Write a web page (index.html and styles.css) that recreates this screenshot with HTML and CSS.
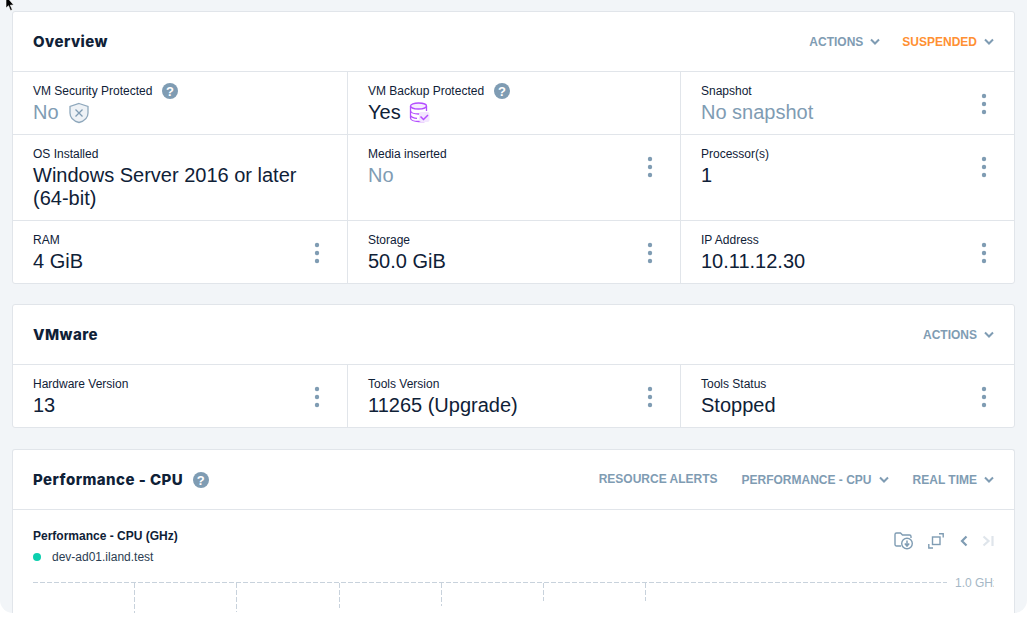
FILE: index.html
```html
<!DOCTYPE html>
<html lang="en">
<head>
<meta charset="utf-8">
<title>VM Overview</title>
<link rel="stylesheet" href="styles.css">
</head>
<body>
<svg class="cursor" width="16" height="13" viewBox="0 0 16 13"><path d="M6 -4V8l2.500-2.300L10.500 10.500l1.800-.8L10.300 5.200l3.400-.2z" fill="#000" stroke="#fff" stroke-width=".6"/></svg>
<svg class="defs" width="0" height="0">
  <defs>
    <g id="kebab"><circle cx="3" cy="3" r="2.200"/><circle cx="3" cy="11" r="2.200"/><circle cx="3" cy="19" r="2.200"/></g>
    <g id="chev"><path d="M1 1.500 5 5.500 9 1.500" fill="none" stroke-width="2"/></g>
    <g id="help"><circle cx="8" cy="8" r="8" fill="#7f9cb3"/><text x="8" y="12.500" text-anchor="middle" class="help-q">?</text></g>
  </defs>
</svg>
<main class="page">
  <section class="card">
    <header class="card-head">
      <h2 class="title">Overview</h2>
      <div class="actions">
        <span class="act">ACTIONS <svg class="chev" width="10" height="7"><use href="#chev"/></svg></span>
        <span class="act act-orange">SUSPENDED <svg class="chev" width="10" height="7"><use href="#chev"/></svg></span>
      </div>
    </header>
    <div class="grid">
      <div class="cell">
        <div class="cell-body">
          <div class="label">VM Security Protected <svg class="help" width="16" height="16"><use href="#help"/></svg></div>
          <div class="value muted">No <svg class="vicon" width="21" height="22" viewBox="0 0 21 22"><path d="M11 1.500 20 4.500V11c0 4.600-3.600 8-9 9.500C5.600 19 2 15.600 2 11V4.500z" fill="#eef2f6" stroke="#8fa8bc" stroke-width="1.300"/><path d="M7.500 7.500 14.500 14.500M14.500 7.500 7.500 14.500" stroke="#7f9cb3" stroke-width="1.300"/></svg></div>
        </div>
      </div>
      <div class="cell">
        <div class="cell-body">
          <div class="label">VM Backup Protected <svg class="help" width="16" height="16"><use href="#help"/></svg></div>
          <div class="value">Yes <svg class="vicon vicon-db" width="21" height="22" viewBox="0 0 21 22"><ellipse cx="9.500" cy="4" rx="8" ry="3" fill="#f6ecff" stroke="#b44dff" stroke-width="1.300"/><path d="M1.500 4V16c0 2 3.500 3.500 8 3.500h6M17.500 4V9M1.500 8.500c0 2 3.500 3.500 8 3.500 3 0 5-.5 6.500-1.500M1.500 13c0 2 3.500 3.300 6.500 3.300" fill="none" stroke="#b44dff" stroke-width="1.300"/><rect x="10" y="10" width="10.500" height="10" rx="2" fill="#f3e6ff"/><path d="M11.500 14.500 14.500 17.500 19 13" fill="none" stroke="#b44dff" stroke-width="1.500"/></svg></div>
        </div>
      </div>
      <div class="cell">
        <div class="cell-body">
          <div class="label">Snapshot</div>
          <div class="value muted">No snapshot</div>
        </div>
        <svg class="kebab" width="6" height="22"><use href="#kebab"/></svg>
      </div>

      <div class="cell">
        <div class="cell-body">
          <div class="label">OS Installed</div>
          <div class="value">Windows Server 2016 or later (64-bit)</div>
        </div>
      </div>
      <div class="cell">
        <div class="cell-body">
          <div class="label">Media inserted</div>
          <div class="value muted">No</div>
        </div>
        <svg class="kebab" width="6" height="22"><use href="#kebab"/></svg>
      </div>
      <div class="cell">
        <div class="cell-body">
          <div class="label">Processor(s)</div>
          <div class="value">1</div>
        </div>
        <svg class="kebab" width="6" height="22"><use href="#kebab"/></svg>
      </div>

      <div class="cell">
        <div class="cell-body">
          <div class="label">RAM</div>
          <div class="value">4 GiB</div>
        </div>
        <svg class="kebab" width="6" height="22"><use href="#kebab"/></svg>
      </div>
      <div class="cell">
        <div class="cell-body">
          <div class="label">Storage</div>
          <div class="value">50.0 GiB</div>
        </div>
        <svg class="kebab" width="6" height="22"><use href="#kebab"/></svg>
      </div>
      <div class="cell">
        <div class="cell-body">
          <div class="label">IP Address</div>
          <div class="value">10.11.12.30</div>
        </div>
        <svg class="kebab" width="6" height="22"><use href="#kebab"/></svg>
      </div>
    </div>
  </section>

  <section class="card">
    <header class="card-head">
      <h2 class="title">VMware</h2>
      <div class="actions">
        <span class="act">ACTIONS <svg class="chev" width="10" height="7"><use href="#chev"/></svg></span>
      </div>
    </header>
    <div class="grid">
      <div class="cell">
        <div class="cell-body">
          <div class="label">Hardware Version</div>
          <div class="value">13</div>
        </div>
        <svg class="kebab" width="6" height="22"><use href="#kebab"/></svg>
      </div>
      <div class="cell">
        <div class="cell-body">
          <div class="label">Tools Version</div>
          <div class="value">11265 (Upgrade)</div>
        </div>
        <svg class="kebab" width="6" height="22"><use href="#kebab"/></svg>
      </div>
      <div class="cell">
        <div class="cell-body">
          <div class="label">Tools Status</div>
          <div class="value">Stopped</div>
        </div>
        <svg class="kebab" width="6" height="22"><use href="#kebab"/></svg>
      </div>
    </div>
  </section>

  <section class="card card-last">
    <header class="card-head">
      <h2 class="title">Performance - CPU <svg class="help help-title" width="16" height="16"><use href="#help"/></svg></h2>
      <div class="actions actions-wide">
        <span class="act act-up">RESOURCE ALERTS</span>
        <span class="act">PERFORMANCE - CPU <svg class="chev" width="10" height="7"><use href="#chev"/></svg></span>
        <span class="act">REAL TIME <svg class="chev" width="10" height="7"><use href="#chev"/></svg></span>
      </div>
    </header>
    <div class="chart-wrap">
      <div class="chart-head">
        <div>
          <div class="chart-title">Performance - CPU (GHz)</div>
          <div class="legend"><span class="dot"></span>dev-ad01.iland.test</div>
        </div>
        <div class="tools">
          <svg width="20" height="18" viewBox="0 0 20 18"><path d="M7 14H2.500A1.500 1.500 0 0 1 1 12.500V2.500A1.500 1.500 0 0 1 2.500 1H6.500L8.500 3H15.500A1.500 1.500 0 0 1 17 4.500V6" fill="none" stroke="#7f9cb3" stroke-width="1.400"/><circle cx="13" cy="11.500" r="5.300" fill="#fff" stroke="#7f9cb3" stroke-width="1.400"/><path d="M13 8.500V13.500M10.800 11.500 13 14 15.200 11.500" fill="none" stroke="#7f9cb3" stroke-width="1.500"/></svg>
          <svg class="tool-expand" width="16" height="16" viewBox="0 0 16 16"><rect x="4.500" y="4" width="7.500" height="7.500" fill="none" stroke="#7f9cb3" stroke-width="1.400"/><path d="M11 .8H15.200V4.500M.8 11V15H5" fill="none" stroke="#7f9cb3" stroke-width="1.400"/></svg>
          <svg width="8" height="12" viewBox="0 0 8 12"><path d="M6.500 1.500 2 6 6.500 10.500" fill="none" stroke="#7f9cb3" stroke-width="2.200"/></svg>
          <svg width="12" height="12" viewBox="0 0 12 12"><path d="M1.500 1.500 6.500 6 1.500 10.500M10.500 1V11" fill="none" stroke="#dfe5eb" stroke-width="2.200"/></svg>
        </div>
      </div>
      <svg class="chart" width="961" height="46" viewBox="0 0 961 46">
        <g class="grid-lines">
          <path d="M0 6.500H914"/>
          <path d="M101.500 7V37"/><path d="M203.500 7V36"/><path d="M306.500 7V32"/><path d="M408.500 7V30"/><path d="M510.500 7V25"/><path d="M612.500 7V25"/>
        </g>
        <text x="922" y="11" class="axis">1.0 GHz</text>
      </svg>
    </div>
  </section>
</main>
</body>
</html>
```
FILE: styles.css
```css
* { box-sizing: border-box; }
html, body { margin: 0; padding: 0; background: #fff; height: 631px; overflow: hidden; }
body { font-family: "Liberation Sans", Arial, sans-serif; color: #0f2137; position: relative; }

.cursor { position: absolute; left: 0; top: 0; z-index: 5; }
.defs { position: absolute; }

.page {
  height: 613px;
  overflow: hidden;
  background: #f2f5f8;
  border-radius: 0 0 13px 13px;
  padding: 11px 12px 0;
  display: flex;
  flex-direction: column;
  gap: 20px;
}

.card {
  background: #fff;
  border: 1px solid #e1e5ea;
  border-radius: 3px;
  flex: none;
}
.card-last { border-bottom: 0; border-radius: 3px 3px 0 0; flex: 1 0 auto; margin-top: 1px; }

.card-head {
  height: 60px;
  display: flex;
  align-items: center;
  justify-content: space-between;
  padding: 0 20px;
  border-bottom: 1px solid #e1e5ea;
}
.title {
  margin: 0;
  font-family: Inter, "Liberation Sans", sans-serif;
  font-size: 15px;
  font-weight: 800;
  letter-spacing: .45px;
  color: #0f2137;
  display: flex;
  align-items: center;
  gap: 9px;
}

.actions { display: flex; align-items: center; gap: 22px; }
.actions-wide { gap: 24px; }
.act {
  font-size: 12px;
  font-weight: 700;
  color: #7f9cb3;
  display: flex;
  align-items: center;
  gap: 7px;
}
.act-orange { color: #ff9033; }
.act-up { position: relative; top: -1px; }
.chev { stroke: #7f9cb3; display: block; }

.grid { display: grid; grid-template-columns: 334px 333px 1fr; }
.cell {
  display: flex;
  justify-content: space-between;
  align-items: flex-start;
  padding: 12px 27px 10px 20px;
  border-left: 1px solid #e1e5ea;
  border-bottom: 1px solid #e1e5ea;
}
.cell:nth-child(3n+1) { border-left: 0; }
.grid .cell:nth-last-child(-n+3) { border-bottom: 0; }
.cell-body { flex: 1; min-width: 0; }
.label {
  font-size: 12px;
  line-height: 14px;
  color: #0f2137;
  display: flex;
  align-items: center;
  gap: 10px;
  height: 14px;
}
.value {
  font-size: 20px;
  line-height: 23px;
  margin-top: 3px;
  color: #0f2137;
  display: flex;
  align-items: center;
  gap: 9px;
  flex-wrap: wrap;
  max-width: 290px;
}
.muted { color: #7f9cb3; }
.vicon { display: block; }
.vicon-db { margin-left: -1px; }
.help { flex: none; display: block; }
.help-title { margin-left: 1px; }
.help-q { font: 700 13px "Liberation Sans", Arial, sans-serif; fill: #fff; }
.kebab { fill: #7f9cb3; flex: none; margin-top: 9px; display: block; }

.chart-wrap { padding: 19px 20px 0; }
.chart-head { display: flex; justify-content: space-between; align-items: flex-start; }
.chart-title { font-size: 12px; font-weight: 700; line-height: 14px; color: #0f2137; }
.legend {
  font-size: 12px;
  line-height: 14px;
  margin-top: 7px;
  display: flex;
  align-items: center;
  gap: 11px;
  color: #2b3d52;
}
.dot { width: 8px; height: 8px; border-radius: 50%; background: #0ccfae; }
.tools { display: flex; align-items: center; gap: 14px; height: 18px; margin-top: 3px; }
.tools svg { display: block; }
.tool-expand { margin-right: 2px; }
.chart { display: block; margin-top: 12px; overflow: hidden; }
.grid-lines path { stroke: #c8d2dc; stroke-width: 1; stroke-dasharray: 5 2; fill: none; }
.axis { font-size: 12px; fill: #a5b7c6; }
```
